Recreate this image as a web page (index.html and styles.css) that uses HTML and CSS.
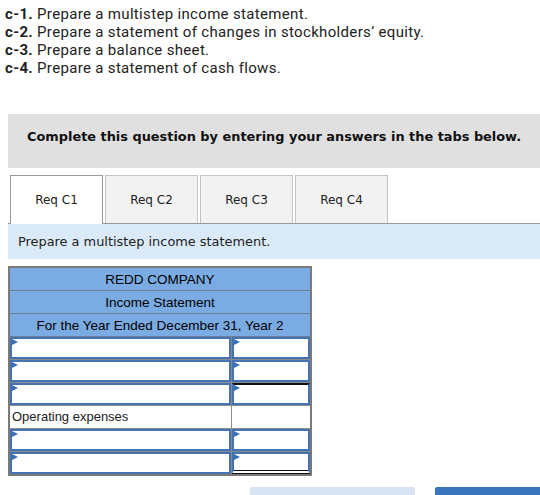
FILE: index.html
```html
<!DOCTYPE html>
<html>
<head>
<meta charset="utf-8">
<link rel="stylesheet" href="styles.css">
</head>
<body>
<div class="intro">
  <p><b>c-1.</b> Prepare a multistep income statement.</p>
  <p><b>c-2.</b> Prepare a statement of changes in stockholders’ equity.</p>
  <p><b>c-3.</b> Prepare a balance sheet.</p>
  <p><b>c-4.</b> Prepare a statement of cash flows.</p>
</div>
<div class="notice">Complete this question by entering your answers in the tabs below.</div>
<div class="tabs">
  <div class="tab active">Req C1</div>
  <div class="tab">Req C2</div>
  <div class="tab">Req C3</div>
  <div class="tab">Req C4</div>
</div>
<div class="instr">Prepare a multistep income statement.</div>
<table class="stmt">
  <tr><th colspan="2">REDD COMPANY</th></tr>
  <tr><th colspan="2">Income Statement</th></tr>
  <tr><th colspan="2">For the Year Ended December 31, Year 2</th></tr>
  <tr><td class="in"><div class="box"></div></td><td class="in num"><div class="box"></div></td></tr>
  <tr><td class="in"><div class="box"></div></td><td class="in num"><div class="box"></div></td></tr>
  <tr><td class="in"><div class="box"></div></td><td class="in num sum"><div class="box"></div></td></tr>
  <tr><td class="label">Operating expenses</td><td class="plain"></td></tr>
  <tr><td class="in"><div class="box"></div></td><td class="in num"><div class="box"></div></td></tr>
  <tr><td class="in"><div class="box"></div></td><td class="in num total"><div class="box"></div></td></tr>
</table>
<div class="buttons">
  <div class="btn prev"></div>
  <div class="btn next"></div>
</div>
</body>
</html>
```

FILE: styles.css
```css
html, body {
  margin: 0;
  padding: 0;
  background: #fff;
}
body {
  width: 540px;
  overflow: hidden;
}
.intro {
  padding: 5px 5px 0 5px;
  font-family: Roboto, "Open Sans", sans-serif;
  font-size: 15px;
  letter-spacing: 0.33px;
  line-height: 18px;
  color: #222;
}
.intro p {
  margin: 0;
  white-space: nowrap;
}
.intro b {
  font-weight: 700;
}
.notice {
  margin: 37px 0 0 8px;
  height: 54px;
  box-sizing: border-box;
  padding: 15px 0 0 19px;
  background: #e0e0e0;
  font-family: Verdana, "DejaVu Sans", sans-serif;
  font-weight: bold;
  font-size: 12.9px;
  color: #111;
  white-space: nowrap;
}
.tabs {
  display: flex;
  gap: 2px;
  margin: 7px 0 0 8px;
  padding-left: 2px;
  border-bottom: 1px solid #999;
  height: 48px;
}
.tab {
  width: 93px;
  height: 48px;
  box-sizing: border-box;
  border: 1px solid #c4c4c4;
  border-bottom: none;
  background: #f2f2f2;
  font-family: Verdana, "DejaVu Sans", sans-serif;
  font-size: 12px;
  color: #222;
  display: flex;
  align-items: center;
  justify-content: center;
}
.tab.active {
  background: #fff;
  border-color: #9a9a9a;
  height: 49px;
}
.instr {
  margin-left: 8px;
  height: 35px;
  box-sizing: border-box;
  padding: 10px 0 0 10px;
  background: #dbeaf8;
  font-family: Verdana, "DejaVu Sans", sans-serif;
  font-size: 12.9px;
  color: #222;
}
.stmt {
  margin: 7px 0 0 8px;
  width: 304px;
  border-collapse: collapse;
  border: 2px solid #7a7a7a;
  font-family: Arial, "Liberation Sans", sans-serif;
  font-size: 13px;
  color: #222;
}
.stmt th {
  height: 22px;
  padding: 0;
  background: #7aabe2;
  border: 1px solid #6e7f95;
  font-weight: normal;
  font-size: 13.5px;
  text-align: center;
  color: #000;
}
.stmt td {
  height: 22px;
  padding: 0;
  border: 1px solid #8a8a8a;
  vertical-align: top;
}
.stmt td.in {
  padding: 0;
  position: relative;
}
.stmt td.num {
  width: 78px;
}
.box {
  height: 22px;
  box-sizing: border-box;
  border: 2px solid #4473b4;
  background: #fff;
  position: relative;
}
.box::before {
  content: "";
  position: absolute;
  left: 0;
  top: 0;
  border-left: 6px solid #3d6fb8;
  border-top: 3px solid transparent;
  border-bottom: 3px solid transparent;
}
.stmt td.sum .box {
  border-top: 2px solid #111;
}
.stmt td.total .box {
  border-bottom: 4px double #111;
}
.stmt td.label {
  padding: 3px 0 0 2px;
  height: 19px;
  background: #fff;
}
.stmt td.plain {
  background: #fff;
}
.buttons {
  display: flex;
  margin: 11px 0 0 250px;
  gap: 20px;
}
.btn {
  height: 20px;
  border-radius: 2px;
  flex-shrink: 0;
}
.btn.prev {
  width: 165px;
  background: #d8e4f3;
}
.btn.next {
  width: 110px;
  background: #3a76bb;
}
```
